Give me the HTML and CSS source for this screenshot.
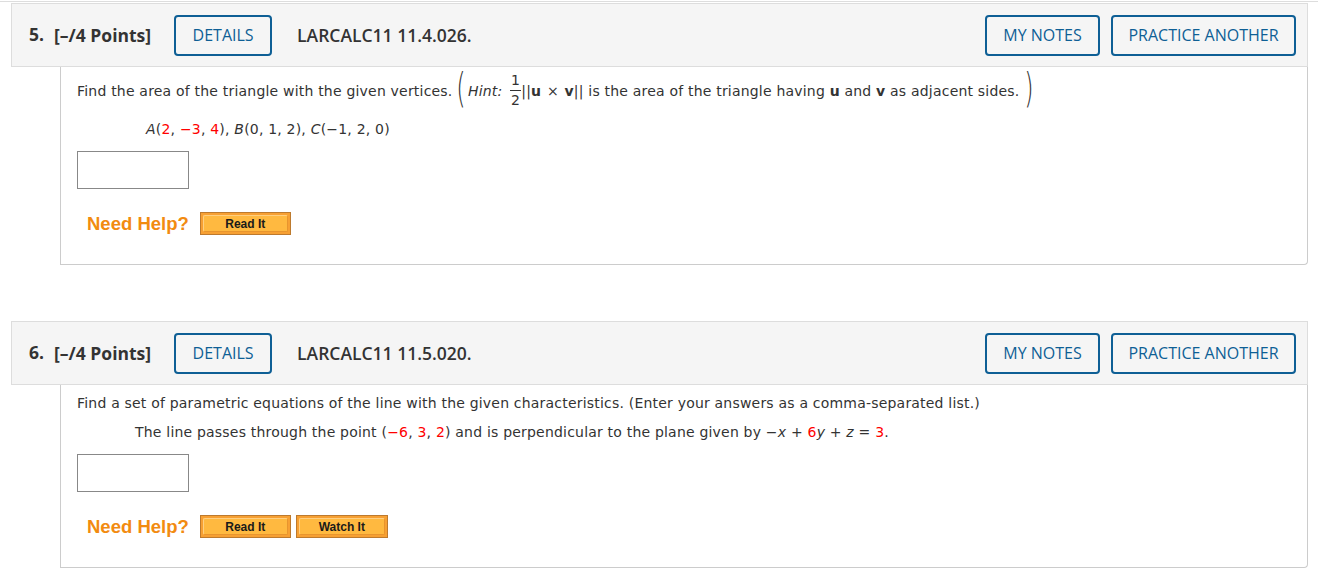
FILE: index.html
```html
<!DOCTYPE html>
<html lang="en">
<head>
  <meta charset="UTF-8">
  <title>Assignment</title>
  <link rel="stylesheet" href="styles.css">
</head>
<body>
  <div class="page">

    <div class="question">
      <div class="q-head">
        <span class="q-num">5.</span>
        <span class="q-points">[&ndash;/4 Points]</span>
        <button class="q-btn">DETAILS</button>
        <span class="q-code">LARCALC11 11.4.026.</span>
        <span class="q-space"></span>
        <button class="q-btn q-btn-notes">MY NOTES</button>
        <button class="q-btn q-btn-wide">PRACTICE ANOTHER</button>
      </div>
      <div class="q-body">
        <p class="q-text q-text-tall">Find the area of the triangle with the given vertices. <span class="paren paren-open">(</span><i>Hint:</i> <span class="frac"><span class="frac-top">1</span><span class="frac-bot">2</span></span>||<b>u</b> <span class="times">&times;</span> <b>v</b>|| is the area of the triangle having <b>u</b> and <b>v</b> as adjacent sides.<span class="paren paren-close">)</span></p>
        <p class="q-given q-given-a"><i>A</i>(<span class="red">2</span>, <span class="red">&minus;3</span>, <span class="red">4</span>), <i>B</i>(0, 1, 2), <i>C</i>(&minus;1, 2, 0)</p>
        <div class="answer"></div>
        <div class="help">
          <span class="help-label">Need Help?</span>
          <button class="help-btn"><span>Read It</span></button>
        </div>
      </div>
    </div>

    <div class="question">
      <div class="q-head">
        <span class="q-num">6.</span>
        <span class="q-points">[&ndash;/4 Points]</span>
        <button class="q-btn">DETAILS</button>
        <span class="q-code">LARCALC11 11.5.020.</span>
        <span class="q-space"></span>
        <button class="q-btn q-btn-notes">MY NOTES</button>
        <button class="q-btn q-btn-wide">PRACTICE ANOTHER</button>
      </div>
      <div class="q-body">
        <p class="q-text">Find a set of parametric equations of the line with the given characteristics. (Enter your answers as a comma-separated list.)</p>
        <p class="q-given q-given-b">The line passes through the point (<span class="red">&minus;6</span>, <span class="red">3</span>, <span class="red">2</span>) and is perpendicular to the plane given by &minus;<i>x</i> + <span class="red">6</span><i>y</i> + <i>z</i> = <span class="red">3</span>.</p>
        <div class="answer"></div>
        <div class="help">
          <span class="help-label">Need Help?</span>
          <button class="help-btn"><span>Read It</span></button>
          <button class="help-btn help-btn-watch"><span>Watch It</span></button>
        </div>
      </div>
    </div>

  </div>
</body>
</html>
```

FILE: styles.css
```css
body {
  margin: 0;
  background: #fff;
  color: #333;
  font-family: "Open Sans", sans-serif;
}
.page {
  border-top: 1px solid #ddd;
  margin-top: 1px;
  padding: 1px 10px 0 11px;
}
.question {
  margin-bottom: 56px;
}

/* header bar */
.q-head {
  display: flex;
  align-items: center;
  height: 62px;
  padding: 0 11px 0 17px;
  background: #f5f5f5;
  border: 1px solid #ddd;
}
.q-num {
  font-size: 17.5px;
  font-weight: 700;
  margin-right: 10px;
  position: relative;
  top: -1px;
}
.q-points {
  font-size: 17.5px;
  font-weight: 700;
  margin-right: 23px;
}
.q-btn {
  height: 41px;
  width: 98px;
  background: transparent;
  border: 2px solid #0e5f95;
  border-radius: 4px;
  color: #0e5f95;
  font-family: "Open Sans", sans-serif;
  font-size: 16px;
  padding: 0;
  margin-right: 11px;
}
.q-btn-notes {
  width: 115px;
}
.q-btn-wide {
  width: 185px;
  margin-right: 0;
}
.q-code {
  font-size: 17.5px;
  font-weight: 600;
  margin-left: 14px;
}
.q-space {
  flex: 1;
}

/* question body */
.q-body {
  margin-left: 49px;
  border: 1px solid #ccc;
  border-top: none;
  border-radius: 0 0 4px 0;
  padding: 8px 16px 29px 16px;
  font-family: "DejaVu Sans", Verdana, sans-serif;
  font-size: 14px;
  letter-spacing: 0.2px;
}
.q-text {
  margin: 0;
  line-height: 20px;
}
.q-text-tall {
  line-height: 32px;
  height: 32px;
}
.paren {
  display: inline-block;
  font-size: 40px;
  font-weight: 200;
  line-height: 32px;
  vertical-align: middle;
  transform: scaleX(0.6) translateY(-4px);
  color: #333;
}
.paren-open {
  margin: 0 -1px 0 -4px;
}
.paren-close {
  margin: 0 0 0 2px;
}
.frac {
  display: inline-flex;
  flex-direction: column;
  align-items: center;
  vertical-align: middle;
  font-size: 14px;
  line-height: 14px;
  margin: 0 0 0 3px;
  position: relative;
  top: -2px;
}
.frac-top {
  border-bottom: 1px solid #333;
  padding: 0 1px 3px;
}
.frac-bot {
  padding-top: 2px;
}
.times {
  margin: 0 1px;
}
.q-given {
  margin: 0;
  line-height: 20px;
}
.q-given-a {
  padding: 12px 0 0 69px;
}
.q-given-b {
  padding: 9px 0 0 58px;
}
.red {
  color: #f00;
}
.answer {
  width: 110px;
  height: 36px;
  border: 1px solid #888;
  margin-top: 12px;
}

/* need help row */
.help {
  display: flex;
  align-items: center;
  margin-top: 23px;
  padding-left: 10px;
}
.help-label {
  font-family: "Liberation Sans", Arial, sans-serif;
  font-weight: 700;
  font-size: 18.5px;
  letter-spacing: 0;
  color: #f28b10;
  margin-right: 11px;
}
.help-btn {
  width: 91px;
  height: 23px;
  margin-right: 5px;
  padding: 2px;
  background: #f7a033;
  border: 1px solid #bd7a2e;
  font-family: "Liberation Sans", Arial, sans-serif;
  font-weight: 700;
  font-size: 12px;
  letter-spacing: 0;
  color: #1a1a1a;
}
.help-btn span {
  display: block;
  height: 100%;
  box-sizing: border-box;
  line-height: 16px;
  background: #ffb940;
  border: 1px solid #ffcf80;
  border-bottom-color: #e8952e;
  border-right-color: #e8952e;
  border-radius: 2px;
}
.help-btn-watch {
  width: 92px;
}
```
